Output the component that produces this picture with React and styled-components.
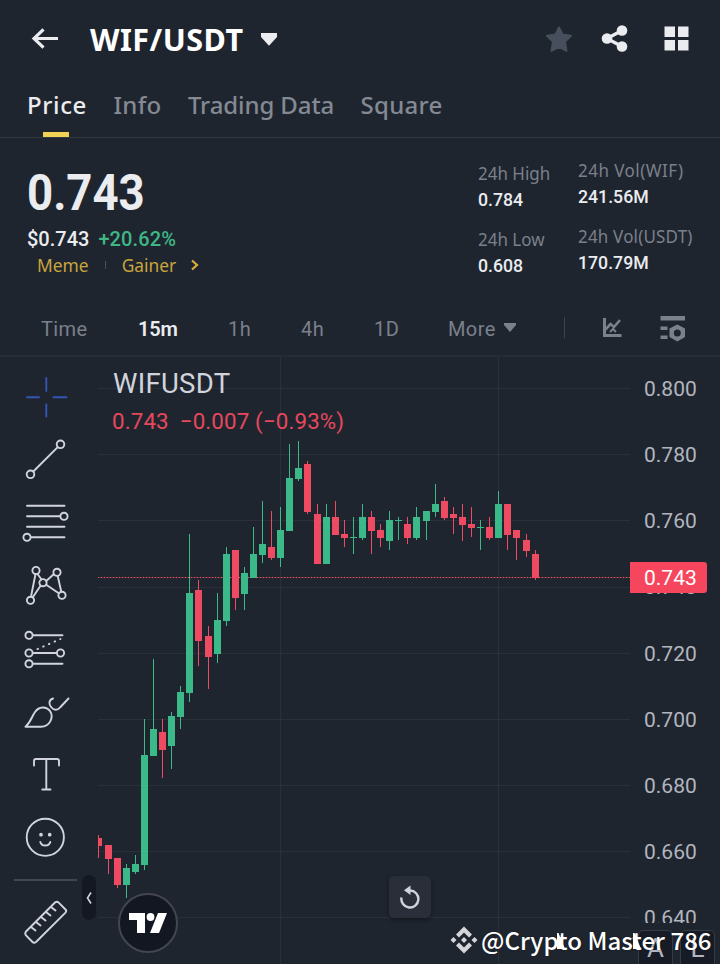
import React from "react";
import styled, { createGlobalStyle } from "styled-components";

const GlobalStyle = createGlobalStyle`
    * {
        box-sizing: border-box;
    }

    body {
        margin: 0;
        background-color: #1f252f;
    }

    svg {
        display: block;
    }
`

const Screen = styled.div`
    width: 720px;
    height: 964px;
    overflow: hidden;
    position: relative;

    display: flex;
    flex-direction: column;

    background-color: #1f252f;
    color: #eaecef;
    font-family: "Noto Sans", sans-serif;
    white-space: nowrap;
`

const Header = styled.header`
    height: 78px;
    padding: 0 29px 0 31px;

    display: flex;
    align-items: center;
`

const Pair = styled.h1`
    margin: 0 14px 0 31px;
    width: 157px;
    font-size: 30.5px;
    line-height: 40px;
    font-weight: 700;
    letter-spacing: 0.5px;
    color: #fff;
`

const Actions = styled.div`
    margin-left: auto;

    display: flex;
    align-items: center;
    gap: 27px;
`

const MenuIcon = styled.svg`
    margin-left: 6px;
`

const Tabs = styled.nav`
    height: 60px;
    padding-left: 27px;
    border-bottom: 1px solid #333943;

    display: flex;
    gap: 27px;
`

const Tab = styled.div`
    width: ${(props) => props.$width}px;
    padding-top: 9px;
    font-size: 24px;
    line-height: 36px;
    font-weight: 500;
    letter-spacing: ${(props) => props.$spacing}px;
    color: ${(props) => (props.$active ? "#eaecef" : "#848993")};

    display: flex;
    flex-direction: column;
    align-items: center;
    justify-content: space-between;

    &::after {
        content: "";
        width: 26px;
        height: 5px;
        margin-right: 2px;
        background-color: ${(props) => (props.$active ? "#f0d254" : "transparent")};
    }
`

const Summary = styled.section`
    height: 167px;
    padding: 0 0 0 27px;

    display: flex;
`

const PriceColumn = styled.div`
    width: 451px;
    padding-top: 27px;
    font-family: Roboto, sans-serif;
`

const LastPrice = styled.div`
    font-size: 49.5px;
    line-height: 56px;
    font-weight: 700;
    transform: scaleX(0.92);
    transform-origin: left;
`

const FiatRow = styled.div`
    margin-top: 6px;
    font-size: 20px;
    line-height: 24px;
    font-weight: 500;

    display: flex;
    gap: 9px;
`

const Change = styled.span`
    color: #3db785;
    letter-spacing: 0.1px;
`

const Tags = styled.div`
    margin-top: 1px;
    padding-left: 10px;
    font-family: "Noto Sans", sans-serif;
    font-size: 17.4px;
    line-height: 26px;
    color: #c9a43c;

    display: flex;
    align-items: center;
    gap: 16px;
`

const TagDivider = styled.i`
    width: 1px;
    height: 8px;
    background-color: #4a4f59;
`

const TagArrow = styled.svg`
    margin-left: -1px;
`

const Stats = styled.div`
    width: ${(props) => props.$width}px;
    padding-top: ${(props) => props.$top}px;

    display: flex;
    flex-direction: column;
    gap: 14px;
`

const Stat = styled.div`
    height: 52px;
`

const StatLabel = styled.div`
    font-size: 17.5px;
    line-height: 26px;
    letter-spacing: ${(props) => props.$spacing || 0}px;
    color: #7b808b;
    transform: scaleX(0.97);
    transform-origin: left;
`

const StatValue = styled.div`
    margin-top: 1px;
    font-family: Roboto, sans-serif;
    font-size: 17.7px;
    line-height: 26px;
    font-weight: 500;
`

const Intervals = styled.div`
    height: 50px;
    padding: 0 34px 2px 41px;
    font-family: Roboto, sans-serif;
    font-size: 20px;
    letter-spacing: 0.4px;
    color: #7b808b;

    display: flex;
    align-items: center;
`

const Interval = styled.span`
    width: ${(props) => props.$width}px;
    font-weight: ${(props) => (props.$active ? 600 : 400)};
    letter-spacing: ${(props) => (props.$active ? -0.2 : 0.4)}px;
    color: ${(props) => (props.$active ? "#eaecef" : "inherit")};

    display: flex;
    align-items: center;
    gap: 8px;
`

const MoreArrow = styled.svg`
    margin-bottom: 4px;
`

const Separator = styled.i`
    width: 1px;
    height: 21px;
    margin: 0 36px 3px 0;
    background-color: #3d424c;
`

const IndicatorIcon = styled.svg`
    margin-bottom: 2px;
`

const SettingsIcon = styled.svg`
    margin-left: auto;
`

const ChartArea = styled.main`
    height: 609px;
    position: relative;
    border-top: 2px solid #262c36;

    display: flex;
`

const Tools = styled.aside`
    width: 98px;
    padding-top: 9px;

    display: flex;
    flex-direction: column;
`

const ToolIcon = styled.svg`
    width: 98px;
    height: 63px;
    fill: none;
    stroke: ${(props) => props.$color || "#d1d4dc"};
    stroke-width: 1.9;
    stroke-linecap: round;
    stroke-linejoin: round;
    flex: none;
`

const ToolDivider = styled.hr`
    width: 63px;
    height: 2px;
    margin: 9px 0 10px 14px;
    border: 0;
    background-color: #434751;
`

const Plot = styled.svg`
    width: 532px;
    height: 607px;
    flex: none;
`

const Scale = styled.div`
    width: 90px;
    height: 566px;
    overflow: hidden;
    padding: 0 0 0 14px;
    font-family: Roboto, sans-serif;
    font-size: 21px;
    color: #b2b5be;
`

const Tick = styled.div`
    height: 66.15px;
    line-height: 64px;
`

const PriceTag = styled.div`
    position: absolute;
    left: 630px;
    top: 205px;
    width: 77px;
    height: 31px;
    padding-left: 14px;
    border-radius: 0 3px 3px 0;
    background-color: #f6465d;
    color: #fff;
    font-family: Roboto, sans-serif;
    font-size: 21px;
    line-height: 32px;
`

const Legend = styled.div`
    position: absolute;
    left: 113px;
    top: 9px;
    font-family: Roboto, sans-serif;
    font-size: 27.5px;
    line-height: 36px;
    letter-spacing: 0.3px;
    color: #d1d4dc;
`

const LegendValues = styled.div`
    margin-left: -1px;
    font-size: 22.3px;
    line-height: 38px;
    letter-spacing: 0.15px;
    color: #e6485c;

    display: flex;
    gap: 11px;
`

const CollapseButton = styled.button`
    position: absolute;
    left: 82px;
    top: 518px;
    width: 14px;
    height: 45px;
    padding: 0;
    border: 0;
    border-radius: 7px;
    background-color: #141823;

    display: grid;
    place-items: center;
`

const LogoBadge = styled.div`
    position: absolute;
    left: 118px;
    top: 536px;
    width: 60px;
    height: 60px;
    border: 2px solid #434651;
    border-radius: 50%;
    background-color: #131722;

    display: grid;
    place-items: center;
`

const ResetButton = styled.button`
    position: absolute;
    left: 389px;
    top: 519px;
    width: 42px;
    height: 42px;
    padding: 0;
    border: 0;
    border-radius: 5px;
    background-color: #292e39;
    box-shadow: 0 2px 4px rgba(0, 0, 0, 0.4);

    display: grid;
    place-items: center;
`

const ScaleModes = styled.div`
    position: absolute;
    left: 638px;
    top: 573px;

    display: flex;
    gap: 7px;
`

const ScaleMode = styled.div`
    width: 35px;
    height: 42px;
    border: 1px solid #363a45;
    border-radius: 5px;
    background-color: #171b26;
    color: #b2b5be;
    font-family: Roboto, sans-serif;
    font-size: 26px;
    line-height: 35px;
    text-align: center;
`

const Watermark = styled.div`
    position: absolute;
    left: 450px;
    top: 922px;
    color: #fff;
    font-family: "Noto Sans CJK SC", sans-serif;
    font-size: 24px;
    font-weight: 500;
    line-height: 36px;
    letter-spacing: 0.05px;
    text-shadow: 0 0 2px rgba(0, 0, 0, 0.4);

    display: flex;
    align-items: center;
    gap: 3px;
`

const Handle = styled.span`
    position: relative;
`

const Notch = styled.svg`
    position: absolute;
    left: ${(props) => props.$left}px;
    top: 10px;
`

// left, high, body top, body bottom, low, direction (1 = up)
const candles = [
    [105, 845, 845, 859, 874, 0],
    [114, 858, 858, 885, 888, 0],
    [123, 864, 868, 885, 898, 1],
    [132, 855, 864, 872, 874, 1],
    [141, 719, 755, 865, 870, 1],
    [150, 659, 729, 756, 756, 1],
    [159, 719, 732, 750, 778, 0],
    [168, 712, 716, 746, 769, 1],
    [177, 686, 692, 717, 729, 1],
    [186, 534, 593, 693, 702, 1],
    [195, 580, 590, 641, 666, 0],
    [205, 626, 636, 657, 689, 0],
    [214, 593, 620, 654, 663, 1],
    [223, 547, 554, 621, 626, 1],
    [232, 550, 550, 598, 610, 0],
    [241, 567, 573, 594, 610, 1],
    [250, 527, 554, 578, 578, 1],
    [259, 501, 544, 555, 563, 1],
    [268, 511, 547, 558, 560, 0],
    [277, 507, 530, 558, 567, 1],
    [286, 444, 478, 531, 531, 1],
    [295, 441, 468, 479, 481, 1],
    [304, 461, 464, 512, 514, 0],
    [314, 504, 514, 564, 564, 0],
    [323, 504, 517, 564, 564, 1],
    [332, 501, 517, 535, 535, 0],
    [341, 520, 534, 538, 547, 0],
    [350, 517, 537, 538, 554, 1],
    [359, 504, 517, 538, 540, 1],
    [368, 511, 517, 531, 554, 0],
    [377, 524, 530, 538, 547, 0],
    [386, 511, 520, 541, 550, 1],
    [395, 517, 520, 521, 540, 1],
    [404, 517, 524, 538, 544, 0],
    [413, 507, 517, 538, 540, 1],
    [423, 511, 511, 521, 540, 1],
    [432, 484, 504, 512, 517, 1],
    [441, 497, 501, 518, 520, 0],
    [450, 507, 514, 518, 534, 0],
    [459, 504, 517, 525, 541, 0],
    [468, 507, 524, 528, 537, 0],
    [477, 520, 527, 528, 550, 1],
    [486, 517, 527, 538, 540, 0],
    [495, 491, 504, 538, 538, 1],
    [504, 504, 504, 535, 550, 0],
    [513, 530, 530, 538, 560, 0],
    [523, 534, 540, 551, 557, 0],
    [532, 550, 554, 578, 580, 0],
]

const gridRows = [388, 454, 520, 587, 653, 719, 785, 851, 917]
const gridColumns = [280, 498]
const ticks = ["0.800", "0.780", "0.760", "0.740", "0.720", "0.700", "0.680", "0.660", "0.640"]

const Candle = ({ data }) => {
    const [left, high, top, bottom, low, up] = data
    return (
        <g fill={up ? "#3cb988" : "#ee4b62"}>
            <rect x={left + 3} y={high} width="1" height={low - high} />
            <rect x={left} y={top} width="7" height={bottom - top} />
        </g>
    );
}

const Chart = () => (
    <Plot viewBox="98 357 532 607" shapeRendering="crispEdges">
        {gridRows.map((y) => <rect key={y} x="98" y={y} width="532" height="1" fill="#2a303a" />)}
        {gridColumns.map((x) => <rect key={x} x={x} y="357" width="1" height="607" fill="#2a303a" />)}
        <path d="M98 577.5H630" stroke="#6b2f3d" />
        <path d="M98 577.5H630" stroke="#e8566a" strokeDasharray="1 2" />
        <rect x="98" y="835" width="1" height="23" fill="#ee4b62" />
        <rect x="98" y="838" width="4" height="8" fill="#ee4b62" />
        {candles.map((candle) => <Candle key={candle[0]} data={candle} />)}
    </Plot>
)

const DrawingTools = () => (
    <Tools>
        <ToolIcon $color="#3455b5">
            <path d="M27 31.3H39M53.5 31.3H66.5M46.3 12V25M46.3 38.5V50.5" />
        </ToolIcon>
        <ToolIcon>
            <path d="M33.3 42.5L57.7 18.1" />
            <circle cx="30.5" cy="45.3" r="3.8" />
            <circle cx="60.5" cy="15.3" r="3.8" />
        </ToolIcon>
        <ToolIcon>
            <path d="M27 13.8H64.5M27 24.3H60M27 34.8H64.5M31 45.3H64.5" />
            <circle cx="64" cy="24.3" r="3.6" />
            <circle cx="27" cy="45.3" r="3.6" />
        </ToolIcon>
        <ToolIcon>
            <path d="M35.5 19L31 41.7M37.5 19L41.5 24.5M46.2 26L53.7 19.3M57.7 21L61.3 36.7M46.2 29.8L58.8 38.3M40.7 30.5L32.8 42.3" />
            <circle cx="36" cy="15.5" r="3.6" />
            <circle cx="57" cy="17.3" r="3.6" />
            <circle cx="43" cy="27.7" r="3.6" />
            <circle cx="30.5" cy="45.3" r="3.6" />
            <circle cx="62" cy="40.3" r="3.6" />
        </ToolIcon>
        <ToolIcon>
            <path d="M33 17.3H62.5M33 35H56.5M33 45.8H62.5" />
            <path d="M37.5 31L60.5 21" strokeDasharray="0.6 5.6" />
            <circle cx="29" cy="17.3" r="3.6" />
            <circle cx="29" cy="35" r="3.6" />
            <circle cx="60.5" cy="35" r="3.6" />
            <circle cx="29" cy="45.8" r="3.6" />
        </ToolIcon>
        <ToolIcon>
            <path d="M25.5 45.7C31 41 32 35 35 31C39 25.5 46 25 50 30C54 36 50 45.7 41 45.7Z" />
            <path d="M53 17.5C48.5 19 48.5 23.5 51.5 26.5C54 29.5 57.5 29.5 60 26.5L68.5 17.5" />
        </ToolIcon>
        <ToolIcon>
            <path d="M34 21.5V17Q34 15 36 15H57Q59 15 59 17V21.5M46.3 15V45.5M42.3 45.5H50.5" />
        </ToolIcon>
        <ToolIcon>
            <circle cx="45.3" cy="30.3" r="18.6" />
            <circle cx="41" cy="27.7" r="0.9" fill="#d1d4dc" />
            <circle cx="49.7" cy="27.7" r="0.9" fill="#d1d4dc" />
            <path d="M40.3 35C41.5 39.7 49 39.7 50.3 35" />
        </ToolIcon>
        <ToolDivider />
        <ToolIcon>
            <path d="M26 40.5L55 11.5Q57 10 58.7 11.7L65.5 18.5Q67 20 65.5 21.7L36 51Q34 52.5 32.5 51L26 44.3Q24.5 42.5 26 40.5Z" />
            <path d="M31 36L35.5 39.5M36 31L40.5 34.5M41 26L45.5 29.5M46 21L50.5 24.5M51 16L55.5 19.5" />
        </ToolIcon>
    </Tools>
)

const App = () => {
    return (
        <Screen>
            <GlobalStyle />
            <Header>
                <svg width="28" height="22" viewBox="0 0 28 22" fill="none" stroke="#eaecef" strokeWidth="3.2">
                    <path d="M27 10.5H3M12.5 1.3L3 10.5L12.5 19.7" />
                </svg>
                <Pair>WIF/USDT</Pair>
                <svg width="17" height="13" fill="#eaecef">
                    <path d="M0 0H16V4L8 12.7L0 4Z" />
                </svg>
                <Actions>
                    <svg width="28" height="28" viewBox="0 0 28 28" fill="#474f5c" stroke="#474f5c" strokeWidth="2" strokeLinejoin="round">
                        <path d="M14 2.5L17.5 9.5L26 10.7L20 16.5L21.5 25.8L14 21.8L6.5 25.8L8 16.5L2 10.7L10.5 9.5Z" />
                    </svg>
                    <svg width="30" height="28" viewBox="0 0 30 28" fill="#eaecef">
                        <path d="M7 13.5L22 5.5M7 13.5L22 21.5" stroke="#eaecef" strokeWidth="3.4" />
                        <circle cx="7" cy="13.5" r="5.3" />
                        <circle cx="22" cy="5.5" r="5.3" />
                        <circle cx="22" cy="21.5" r="5.3" />
                    </svg>
                    <MenuIcon width="28" height="26" viewBox="0 0 28 26" fill="#eaecef">
                        <path d="M1.5 0.5H12V11H1.5ZM15 0.5H25.5V11H15ZM1.5 14H12V24.5H1.5ZM15 14H25.5V24.5H15Z" />
                    </MenuIcon>
                </Actions>
            </Header>
            <Tabs>
                <Tab $active $width={60} $spacing={0.6}>Price</Tab>
                <Tab $width={47} $spacing={0.3}>Info</Tab>
                <Tab $width={146} $spacing={-0.1}>Trading Data</Tab>
                <Tab $width={81} $spacing={0.3}>Square</Tab>
            </Tabs>
            <Summary>
                <PriceColumn>
                    <LastPrice>0.743</LastPrice>
                    <FiatRow>
                        <span>$0.743</span>
                        <Change>+20.62%</Change>
                    </FiatRow>
                    <Tags>
                        <span>Meme</span>
                        <TagDivider />
                        <span>Gainer</span>
                        <TagArrow width="8" height="12" fill="none" stroke="#d9ae3d" strokeWidth="2.2">
                            <path d="M1 1.5L6 6L1 10.5" />
                        </TagArrow>
                    </Tags>
                </PriceColumn>
                <Stats $width={100} $top={22}>
                    <Stat>
                        <StatLabel>24h High</StatLabel>
                        <StatValue>0.784</StatValue>
                    </Stat>
                    <Stat>
                        <StatLabel>24h Low</StatLabel>
                        <StatValue>0.608</StatValue>
                    </Stat>
                </Stats>
                <Stats $width={142} $top={19}>
                    <Stat>
                        <StatLabel $spacing={0.5}>24h Vol(WIF)</StatLabel>
                        <StatValue>241.56M</StatValue>
                    </Stat>
                    <Stat>
                        <StatLabel $spacing={0.2}>24h Vol(USDT)</StatLabel>
                        <StatValue>170.79M</StatValue>
                    </Stat>
                </Stats>
            </Summary>
            <Intervals>
                <Interval $width={97}>Time</Interval>
                <Interval $width={90} $active>15m</Interval>
                <Interval $width={73}>1h</Interval>
                <Interval $width={73}>4h</Interval>
                <Interval $width={74}>1D</Interval>
                <Interval $width={116}>
                    More
                    <MoreArrow width="12" height="9" fill="#7b808b">
                        <path d="M0 0H12V2L6 9L0 2Z" />
                    </MoreArrow>
                </Interval>
                <Separator />
                <IndicatorIcon width="22" height="22" viewBox="0 0 22 22" fill="none" stroke="#7b808b" strokeWidth="3">
                    <path d="M3.5 1V18.5H20.5" />
                    <path d="M4 13L9.5 7L13 10L19 3" strokeWidth="2.6" />
                    <path d="M9 15L12 12L15 15" strokeWidth="2" />
                </IndicatorIcon>
                <SettingsIcon width="26" height="26" viewBox="0 0 26 26" fill="#7b808b">
                    <path d="M0.5 0H25V4.5H0.5ZM0.5 10.5H7.5V14H0.5ZM0.5 19.5H7.5V23H0.5Z" />
                    <path fillRule="evenodd" d="M17.3 8.5L25 12.5V21L17.3 25.5L9.5 21V12.5ZM17.3 13.5A3.5 3.5 0 1 0 17.3 20.5A3.5 3.5 0 1 0 17.3 13.5Z" />
                </SettingsIcon>
            </Intervals>
            <ChartArea>
                <DrawingTools />
                <Chart />
                <Scale>
                    {ticks.map((tick) => <Tick key={tick}>{tick}</Tick>)}
                </Scale>
                <PriceTag>0.743</PriceTag>
                <Legend>
                    WIFUSDT
                    <LegendValues>
                        <span>0.743</span>
                        <span>−0.007 (−0.93%)</span>
                    </LegendValues>
                </Legend>
                <CollapseButton>
                    <svg width="6" height="14" fill="none" stroke="#d1d4dc" strokeWidth="1.6">
                        <path d="M5 1.5L1.5 7L5 12.5" />
                    </svg>
                </CollapseButton>
                <LogoBadge>
                    <svg width="38" height="20" fill="#fff">
                        <path d="M0 0H16V20H8V7H0Z" />
                        <circle cx="21.5" cy="4" r="3.9" />
                        <path d="M29 0H38L30 20H21Z" />
                    </svg>
                </LogoBadge>
                <ResetButton>
                    <svg width="22" height="24" viewBox="0 0 22 24">
                        <path d="M2.5 12.5A8.5 8.5 0 1 0 11 5.5" fill="none" stroke="#d1d4dc" strokeWidth="2.4" />
                        <path d="M11.5 0.5V10L5 5.3Z" fill="#d1d4dc" />
                    </svg>
                </ResetButton>
                <ScaleModes>
                    <ScaleMode>A</ScaleMode>
                    <ScaleMode>L</ScaleMode>
                </ScaleModes>
            </ChartArea>
            <Watermark>
                <svg width="28" height="28" viewBox="0 0 28 28" fill="#d5d6d8">
                    <path d="M14 0.5L22 8.5L19 11.5L14 6.5L9 11.5L6 8.5ZM14 27.5L22 19.5L19 16.5L14 21.5L9 16.5L6 19.5ZM14 11L17 14L14 17L11 14ZM3.5 11L6.5 14L3.5 17L0.5 14ZM24.5 11L27.5 14L24.5 17L21.5 14Z" />
                </svg>
                <Handle>
                    @Crypto Master 786
                    <Notch $left={76} width="9" height="18" fill="#fff">
                        <path d="M0 1H1.5L8 17H0Z" />
                    </Notch>
                    <Notch $left={152} width="9" height="18" fill="#fff">
                        <path d="M0 1H1.5L8 17H0Z" />
                    </Notch>
                </Handle>
            </Watermark>
        </Screen>
    );
}

export default App
